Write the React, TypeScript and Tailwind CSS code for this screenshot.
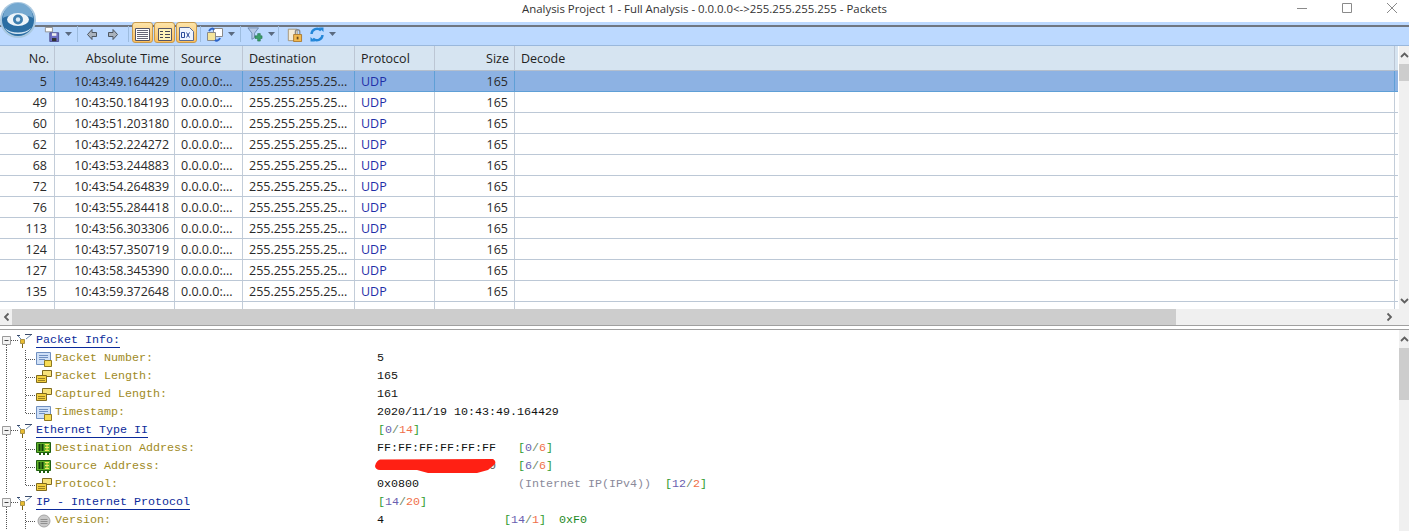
import React from "react";

const packets = [
  ["5", "10:43:49.164429"],
  ["49", "10:43:50.184193"],
  ["60", "10:43:51.203180"],
  ["62", "10:43:52.224272"],
  ["68", "10:43:53.244883"],
  ["72", "10:43:54.264839"],
  ["76", "10:43:55.284418"],
  ["113", "10:43:56.303306"],
  ["124", "10:43:57.350719"],
  ["127", "10:43:58.345390"],
  ["135", "10:43:59.372648"],
];

const cols = "grid grid-cols-[55px_120px_68px_112px_80px_80px_880px_3px]";

const Logo = () => (
  <svg width="37" height="38" viewBox="0 0 37 38" className="absolute left-0 top-[1px]">
    <circle cx="18" cy="19" r="18" fill="#a9c8e0" />
    <circle cx="18" cy="19" r="16" fill="#2b6ea3" />
    <path d="M3 17a15 15 0 0 1 30 0c-6-4-24-4-30 0z" fill="#74a8d0" />
    <path d="M5 27c6 6 20 6 26 0-4 8-22 8-26 0z" fill="#cfe3f2" />
    <ellipse cx="18" cy="18.500" rx="11" ry="6.500" fill="#eef5fa" />
    <circle cx="18" cy="18.500" r="5" fill="#3f7fb0" />
    <circle cx="18" cy="18.500" r="2.200" fill="#dcebf6" />
  </svg>
);

const Caret = () => (
  <svg width="7" height="4" viewBox="0 0 7 4" className="block"><path d="M0 0h7L3.500 4z" fill="#5a6a80" /></svg>
);

const Sep = () => <div className="h-[16px] w-px bg-[#9dbcdf]" />;

const Save = () => (
  <svg width="16" height="15" viewBox="0 0 16 17" className="block">
    <path d="M.5.500h8v5h-8z" fill="#fff" stroke="#8a8a8a" />
    <path d="M5.500 6.500h10v10h-10z" fill="#6d6fc4" stroke="#4a4c8c" />
    <path d="M8 7h5v3H8z" fill="#eee" />
    <path d="M8 12.500h5V16H8z" fill="#333" />
  </svg>
);

const Arrow = ({ flip }: { flip?: boolean }) => (
  <svg width="10" height="11" viewBox="0 0 10 11" className={`block ${flip ? "-scale-x-100" : ""}`}>
    <path d="M.5 5.500 5 .5v3h4.500v4H5v3z" fill="#a9b2bd" stroke="#4d5661" />
  </svg>
);

const ToggleBtn = ({ children }: { children: React.ReactNode }) => (
  <div className="flex h-[21px] w-[21px] items-center justify-center rounded-[3px] border border-[#c79a4e] bg-gradient-to-b from-[#fde4a8] to-[#fbbf5c] pt-[3px]">
    {children}
  </div>
);

const Toolbar = () => (
  <div className="relative h-[24px] border-b border-[#9ab8dc] bg-[#bcd9ff]">
    <div className="absolute left-0 right-0 top-[3px] h-[2px] bg-[#6f7680]" />
    <div className="absolute left-[44px] top-[1px] flex h-[22px] items-center">
      <Save />
      <div className="ml-[5px]"><Caret /></div>
      <div className="ml-[5px]"><Sep /></div>
      <div className="ml-[9px]"><Arrow /></div>
      <div className="ml-[11px]"><Arrow flip /></div>
      <div className="ml-[10px]"><Sep /></div>
      <div className="ml-[3px] mt-[-1px] flex gap-px self-start">
        <ToggleBtn>
          <svg width="15" height="13" viewBox="0 0 15 13" className="block">
            <path d="M.5.500h14v12H.5z" fill="#fff" stroke="#556" />
            <path d="M2 2.500h11M2 4.500h11M2 6.500h11M2 8.500h11M2 10.500h11" stroke="#667" />
          </svg>
        </ToggleBtn>
        <ToggleBtn>
          <svg width="14" height="13" viewBox="0 0 14 13" className="block">
            <path d="M.5.500h13v12H.5z" fill="#fff2b8" stroke="#556" />
            <path d="M2 3.500h3M2 6.500h3M2 9.500h3M7 3.500h5M7 6.500h5M7 9.500h5" stroke="#445" />
          </svg>
        </ToggleBtn>
        <ToggleBtn>
          <svg width="15" height="14" viewBox="0 0 15 14" className="block">
            <path d="M.5.500h10l4 4v9H.5z" fill="#eef4ff" stroke="#5a6a90" />
            <path d="M2.500 5.500h3v5h-3zM7.500 5.500l3 5M10.500 5.500l-3 5" fill="none" stroke="#2a4a9a" />
          </svg>
        </ToggleBtn>
      </div>
      <div className="ml-[3px]"><Sep /></div>
      <div className="ml-[5px]">
        <svg width="17" height="15" viewBox="0 0 17 15" className="block">
          <path d="M7.500 1.500h9v8h-9z" fill="#fff" stroke="#8a8a8a" />
          <path d="M1.500 5.500h8v8h-8z" fill="#f5e59a" stroke="#8a8a8a" />
          <path d="M3 4c2-3 4-3 5-1M14 11c-1 3-4 3-5 2" stroke="#2a62c8" strokeWidth="2" fill="none" />
        </svg>
      </div>
      <div className="ml-[5px]"><Caret /></div>
      <div className="ml-[5px]"><Sep /></div>
      <div className="ml-[6px]">
        <svg width="16" height="15" viewBox="0 0 16 17" className="block">
          <path d="M0 1h12L7.500 7v5L4.500 14V7z" fill="#b4c8e6" stroke="#6a86ac" />
          <path d="M8 10h3V7.500h3V10h2v3h-2v3h-3v-3H8z" fill="#3ca06a" stroke="#1f6a44" strokeWidth=".6" />
        </svg>
      </div>
      <div className="ml-[5px]"><Caret /></div>
      <div className="ml-[3px]"><Sep /></div>
      <div className="ml-[7px]">
        <svg width="17" height="15" viewBox="0 0 17 17" className="block">
          <path d="M1.500 2.500h10v13h-10z" fill="#f4ecd8" stroke="#a09070" />
          <path d="M7.500 8.500h9v8h-9z" fill="#f2b94e" stroke="#a9752a" />
          <path d="M9.500 8V5.500a2.500 2.500 0 0 1 5 0V8" fill="none" stroke="#8a8a8a" strokeWidth="1.500" />
          <path d="M11 11h2v3h-2z" fill="#6a4a1a" />
        </svg>
      </div>
      <div className="ml-[7px]">
        <svg width="14" height="15" viewBox="0 0 14 15" fill="none" stroke="#2386d8" strokeWidth="2.400" className="block">
          <path d="M1.500 7A5.500 5.500 0 0 1 11 3.500" />
          <path d="M12.500 8A5.500 5.500 0 0 1 3 11.500" />
          <path d="M9 .500h4.500V5z" fill="#2386d8" stroke="none" />
          <path d="M5 14.500H.5V10z" fill="#2386d8" stroke="none" />
        </svg>
      </div>
      <div className="ml-[5px]"><Caret /></div>
    </div>
  </div>
);

const HeaderCell = ({ children, right }: { children?: React.ReactNode; right?: boolean }) => (
  <div className={`flex items-center border-r border-[#bcc6d4] pt-[2px] ${right ? "justify-end pr-[5px]" : "pl-[6px]"}`}>
    {children}
  </div>
);

const Cell = ({ children, className, selected }: { children?: React.ReactNode; className: string; selected?: boolean }) => (
  <div className={`flex items-center overflow-hidden whitespace-nowrap border-r pt-[2px] ${selected ? "border-[#5f9fd6]" : "border-[#c3cdd9]"} ${className}`}>
    {children}
  </div>
);

const PacketTable = () => (
  <div className="w-[1398px] shrink-0">
    <div className={`${cols} h-[25px] border-b border-[#b4bfcd] bg-[#d6e4f1] text-[#222]`}>
      <HeaderCell right>No.</HeaderCell>
      <HeaderCell right>Absolute Time</HeaderCell>
      <HeaderCell>Source</HeaderCell>
      <HeaderCell>Destination</HeaderCell>
      <HeaderCell>Protocol</HeaderCell>
      <HeaderCell right>Size</HeaderCell>
      <HeaderCell>Decode</HeaderCell>
      <div />
    </div>
    {packets.map(([no, time], i) => {
      const selected = i === 0;
      const row = selected ? "bg-[#8db2e3] border-b border-[#5f9fd6]" : "bg-white border-b border-[#bcc8d6]";
      return (
        <div key={no} className={`${cols} h-[21px] ${row} text-[#2a2a2a]`}>
          <Cell selected={selected} className="justify-end pr-[7px]">{no}</Cell>
          <Cell selected={selected} className="justify-end pr-[5px] text-[12.4px]">{time}</Cell>
          <Cell selected={selected} className="pl-[6px]">0.0.0.0:...</Cell>
          <Cell selected={selected} className="pl-[6px]">255.255.255.25...</Cell>
          <Cell selected={selected} className="pl-[6px] text-[#1f2fa8]">UDP</Cell>
          <Cell selected={selected} className="justify-end pr-[6px]">165</Cell>
          <Cell selected={selected} className="" />
          <div />
        </div>
      );
    })}
    <div className={`${cols} h-[7px]`}>
      {[0, 1, 2, 3, 4, 5, 6].map((c) => (
        <div key={c} className="border-r border-[#c3cdd9]" />
      ))}
    </div>
  </div>
);

const Chevron = ({ dir }: { dir: "up" | "down" | "left" | "right" }) => {
  const rot = { up: "", down: "rotate-180", left: "-rotate-90", right: "rotate-90" }[dir];
  return (
    <svg width="9" height="6" viewBox="0 0 9 6" className={`block ${rot}`}>
      <path d="M1 5l3.500-3.500L8 5" fill="none" stroke="#606060" strokeWidth="1.800" />
    </svg>
  );
};

const VScroll = ({ thumb, rest }: { thumb: number; rest?: boolean }) => (
  <div className="ml-px flex h-full w-[10px] shrink-0 flex-col bg-[#f0f0f0]">
    <div className="flex h-[18px] shrink-0 items-center justify-center"><Chevron dir="up" /></div>
    <div className="min-h-0 flex-1">
      <div className="bg-[#cdcdcd]" style={{ height: thumb }} />
    </div>
    {rest && <div className="flex h-[17px] shrink-0 items-center justify-center"><Chevron dir="down" /></div>}
  </div>
);

type Kind = "doc" | "tag" | "chip" | "disc";

const NodeIcon = ({ kind }: { kind: Kind }) => {
  if (kind === "doc")
    return (
      <svg width="16" height="15" viewBox="0 0 16 15" className="block">
        <path d="M.5.500h14v12H.5z" fill="#cfe0f7" stroke="#6f8fc0" />
        <path d="M3 3.500h9M3 5.500h9M3 7.500h6" stroke="#6f8fc0" />
        <path d="M8.500 8.500h7v6h-7z" fill="#f7dc55" stroke="#8f7a20" />
      </svg>
    );
  if (kind === "tag")
    return (
      <svg width="16" height="14" viewBox="0 0 16 14" className="block">
        <path d="M6.500.500h9v6h-9z" fill="#f7e27a" stroke="#7f6a20" />
        <path d="M.5 5.500h10v7H.5z" fill="#f4d040" stroke="#7f6a20" />
        <path d="M2 8.500h7M2 10.500h7" stroke="#9a8020" />
      </svg>
    );
  if (kind === "chip")
    return (
      <svg width="16" height="14" viewBox="0 0 16 14" className="block">
        <path d="M.5.500h14v10H.5z" fill="#63b32a" stroke="#1f5f10" />
        <path d="M2.500 2h2v7h-2zM5.500 2h2v7h-2z" fill="#0f3f08" />
        <path d="M9 2.500h4M9 5.500h4M9 8.500h4M11 2v7" stroke="#f4ea5a" />
        <path d="M3 12h2M7 12h2M11 12h2" stroke="#1f5f10" strokeWidth="2" />
      </svg>
    );
  return (
    <svg width="16" height="14" viewBox="0 0 16 14" className="block">
      <circle cx="8" cy="7" r="6" fill="#c9c9c9" stroke="#a5a5a5" />
      <path d="M4.500 5.500h7M4.500 7.500h7M4.500 9.500h7" stroke="#8f8f8f" />
    </svg>
  );
};

const Frac = ({ a, b }: { a: string; b: string }) => (
  <span>
    <span className="text-[#2f9a2f]">[</span>
    <span className="text-[#6a5fb0]">{a}</span>
    <span className="text-[#6a8a6a]">/</span>
    <span className="text-[#f0704a]">{b}</span>
    <span className="text-[#2f9a2f]">]</span>
  </span>
);

const SectionRow = ({ title, children }: { title: string; children?: React.ReactNode }) => (
  <div className="flex h-[18px] items-center">
    <svg width="36" height="18" viewBox="0 0 36 18" className="shrink-0">
      <path d="M6.500 13v5M11 8.500h7" stroke="#555" strokeDasharray="1 1" />
      <path d="M2.500 4.500h8v8h-8z" fill="#f3f3f3" stroke="#9a9a9a" />
      <path d="M4.500 8.500h4" stroke="#444" />
      <path d="M17 3.500h3M25 2.500h7" stroke="#3a4a6a" />
      <path d="M18 4l3 3M31 3l-5 4" stroke="#6a8ab0" />
      <path d="M20.500 7.500h4v4h-4z" fill="#e9bd30" stroke="#7a6210" strokeWidth=".6" />
      <path d="M22.500 12v4" stroke="#7a6210" />
    </svg>
    <div className="w-[341px] shrink-0">
      <span className="border-b border-[#0a2a9a] text-[#0a2a9a]">{title}</span>
    </div>
    <div className="ml-[1px]">{children}</div>
  </div>
);

const LeafRow = ({ kind, label, last, children }: { kind: Kind; label: string; last?: boolean; children?: React.ReactNode }) => (
  <div className="flex h-[18px] items-center">
    <svg width="36" height="18" viewBox="0 0 36 18" className="shrink-0">
      <path d="M6.500 0v18" stroke="#555" strokeDasharray="1 1" />
      <path d={last ? "M25.500 0v9.500M26 9.500h10" : "M25.500 0v18M26 9.500h10"} stroke="#555" strokeDasharray="1 1" />
    </svg>
    <div className="flex w-[19px] shrink-0"><NodeIcon kind={kind} /></div>
    <div className="w-[322px] shrink-0 text-[#a08a1e]">{label}</div>
    {children}
  </div>
);

const Tree = () => (
  <div className="min-w-0 flex-1 overflow-hidden whitespace-pre bg-white pt-[1px] font-['Liberation_Mono',monospace] text-[11.67px] text-[#111]">
    <SectionRow title="Packet Info:" />
    <LeafRow kind="doc" label="Packet Number:">5</LeafRow>
    <LeafRow kind="tag" label="Packet Length:">165</LeafRow>
    <LeafRow kind="tag" label="Captured Length:">161</LeafRow>
    <LeafRow kind="doc" label="Timestamp:" last>2020/11/19 10:43:49.164429</LeafRow>
    <SectionRow title="Ethernet Type II"><Frac a="0" b="14" /></SectionRow>
    <LeafRow kind="chip" label="Destination Address:">
      <div className="w-[141px] shrink-0">FF:FF:FF:FF:FF:FF</div>
      <Frac a="0" b="6" />
    </LeafRow>
    <LeafRow kind="chip" label="Source Address:">
      <div className="relative w-[141px] shrink-0 text-[#555]">
        00:00:00:00:00:00
        <svg width="121" height="15" viewBox="0 0 121 15" className="absolute left-[-2px] top-[1px]">
          <path
            d="M0 7C1 3 3 1 5 .5L118 0c2 1 3 3 2 5l-7 6-11 3H53l-11-3H5C2 11 0 9 0 7z"
            fill="#ff2014"
          />
        </svg>
      </div>
      <Frac a="6" b="6" />
    </LeafRow>
    <LeafRow kind="tag" label="Protocol:" last>
      <div className="w-[141px] shrink-0">0x0800</div>
      <div className="w-[147px] shrink-0 text-[#8a8a9a]">(Internet IP(IPv4))</div>
      <Frac a="12" b="2" />
    </LeafRow>
    <SectionRow title="IP - Internet Protocol"><Frac a="14" b="20" /></SectionRow>
    <LeafRow kind="disc" label="Version:">
      <div className="w-[127px] shrink-0">4</div>
      <div className="w-[55px] shrink-0"><Frac a="14" b="1" /></div>
      <span className="text-[#1f8a1f]">0xF0</span>
    </LeafRow>
  </div>
);

export default function App() {
  return (
    <div className="relative flex h-[531px] w-[1409px] flex-col overflow-hidden bg-white font-['Open_Sans','Noto_Sans',sans-serif] text-[12.5px]">
      <div className="relative flex h-[22px] shrink-0 items-center justify-center bg-white pb-[5px] text-[11.4px] text-[#333]">
        Analysis Project 1 - Full Analysis - 0.0.0.0&lt;-&gt;255.255.255.255 - Packets
        <div className="absolute right-[12px] top-[3px] flex items-center gap-[35px]">
          <svg width="10" height="10" viewBox="0 0 10 10" className="block"><path d="M0 5.500h10" stroke="#8a8a8a" /></svg>
          <svg width="10" height="10" viewBox="0 0 10 10" className="block"><path d="M.5.500h9v9h-9z" fill="none" stroke="#8a8a8a" /></svg>
          <svg width="10" height="10" viewBox="0 0 10 10" className="block"><path d="M0 0l10 10M10 0L0 10" stroke="#8a8a8a" /></svg>
        </div>
      </div>
      <Toolbar />
      <div className="flex h-[263px] shrink-0">
        <PacketTable />
        <VScroll thumb={17} rest />
      </div>
      <div className="flex h-[16px] shrink-0 items-center bg-[#f0f0f0]">
        <div className="flex h-full w-[12px] items-center justify-center"><Chevron dir="left" /></div>
        <div className="h-full w-[1164px] bg-[#cdcdcd]" />
        <div className="flex h-full flex-1 items-center justify-end pr-[15px]"><Chevron dir="right" /></div>
      </div>
      <div className="h-[5px] shrink-0 border-y border-[#a0a0a0] bg-white" />
      <div className="flex min-h-0 flex-1">
        <div className="flex min-w-0 flex-1 pt-px"><Tree /></div>
        <VScroll thumb={52} />
      </div>
      <Logo />
    </div>
  );
}
